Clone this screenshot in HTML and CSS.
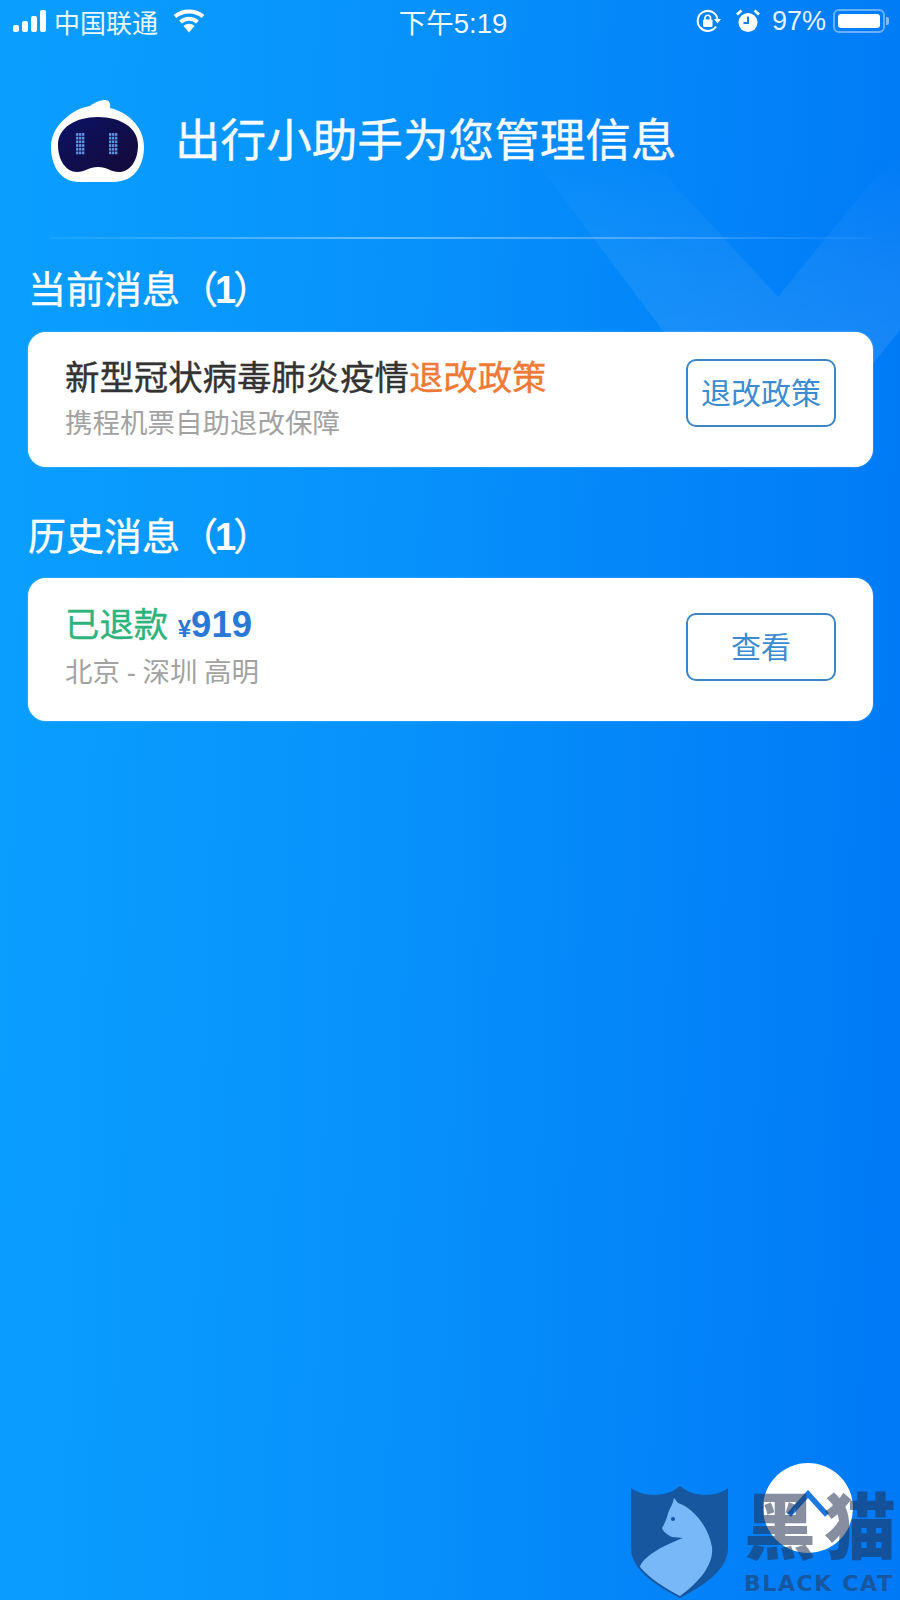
FILE: index.html
```html
<!DOCTYPE html>
<html>
  <head>
    <meta charset="utf-8">
    <meta name="viewport" content="width=device-width, initial-scale=1.0">
    <title>出行小助手</title>
    <link rel="stylesheet" href="styles.css">
  </head>
  <body>
    <div class="page">
      <!-- background V -->
      <svg class="bg-v" viewBox="0 0 900 400" width="900" height="400">
        <defs>
          <linearGradient id="vfade" x1="0" y1="0" x2="0" y2="1">
            <stop offset="0" stop-color="#fff" stop-opacity="0"/>
            <stop offset="0.5" stop-color="#fff" stop-opacity="0.06"/>
            <stop offset="1" stop-color="#fff" stop-opacity="0.1"/>
          </linearGradient>
        </defs>
        <polygon points="535,160 652,160 778,297 885,165 900,150 900,330 860,380 670,340" fill="url(#vfade)"/>
      </svg>

      <div class="status">
        <div class="status-left">
          <div class="signal">
            <span class="bar bar-1"></span>
            <span class="bar bar-2"></span>
            <span class="bar bar-3"></span>
            <span class="bar bar-4"></span>
          </div>
          <span class="carrier">中国联通</span>
          <svg class="wifi" viewBox="0 0 32 24" width="32" height="24">
            <path d="M16 23.5 L10.5 17 C14 14 18 14 21.5 17 Z" fill="#fff"/>
            <path d="M7.5 13 C12.5 8.8 19.5 8.8 24.5 13" fill="none" stroke="#fff" stroke-width="4"/>
            <path d="M2 7.5 C10 0.8 22 0.8 30 7.5" fill="none" stroke="#fff" stroke-width="4"/>
          </svg>
        </div>
        <div class="time">下午5:19</div>
        <div class="status-right">
          <svg class="lock" viewBox="0 0 26 26" width="26" height="26">
            <path d="M21 18.5 A10 10 0 1 1 22.5 11" fill="none" stroke="#fff" stroke-width="2"/>
            <path d="M19 11 L26 11 L22.5 15.5 Z" fill="#fff"/>
            <rect x="8" y="11.5" width="9.5" height="7.5" rx="1" fill="#fff"/>
            <path d="M10 12 V9.5 A2.8 2.8 0 0 1 15.5 9.5 V12" fill="none" stroke="#fff" stroke-width="1.6"/>
          </svg>
          <svg class="alarm" viewBox="0 0 24 24" width="24" height="24">
            <circle cx="12" cy="13.5" r="9.5" fill="#fff"/>
            <path d="M12 7.5 V14 H7.5" fill="none" stroke="#1a7ef0" stroke-width="2"/>
            <path d="M1 5.5 L5.5 1.5 M23 5.5 L18.5 1.5" stroke="#fff" stroke-width="2.8"/>
          </svg>
          <span class="percent">97%</span>
          <div class="battery"><div class="battery-fill"></div></div>
          <div class="battery-tip"></div>
        </div>
      </div>

      <div class="head">
        <svg class="robot" viewBox="0 0 93 82" width="93" height="82">
          <defs>
            <linearGradient id="face" x1="0" y1="0" x2="1" y2="1">
              <stop offset="0" stop-color="#0b1265"/>
              <stop offset="1" stop-color="#150a38"/>
            </linearGradient>
            <pattern id="dots" x="25" y="33" width="3" height="3.7" patternUnits="userSpaceOnUse">
              <rect width="2.4" height="2.8" rx="0.6" fill="#5f93dd"/>
            </pattern>
          </defs>
          <path d="M16 17 C24 10 32 7 39 6 C44 2 50 0 54 0 C58 0 60 3 59 8 C76 12 93 26 93 47 C93 62 86 82 62 82 L28 82 C10 82 0 66 0 47 C0 34 7 24 16 17 Z" fill="#fff"/>
          <path d="M47 17 C70 17 87 28 87 45 C87 62 78 72 68 72 C60 72 56 67 47 67 C38 67 34 72 26 72 C15 72 7 60 7 45 C7 28 24 17 47 17 Z" fill="url(#face)"/>
          <rect x="25" y="33" width="9" height="22" fill="url(#dots)"/>
          <rect x="58" y="33" width="9" height="22" fill="url(#dots)"/>
        </svg>
        <h1 class="head-title">出行小助手为您管理信息</h1>
      </div>
      <div class="divider"></div>

      <div class="section section-current">
        <h2 class="section-title">当前消息<span class="count">（<b>1</b>）</span></h2>
        <div class="card card-current">
          <div class="card-text">
            <p class="card-title">新型冠状病毒肺炎疫情<span class="orange">退改政策</span></p>
            <p class="card-sub">携程机票自助退改保障</p>
          </div>
          <div class="btn btn-current">退改政策</div>
        </div>
      </div>

      <div class="section section-history">
        <h2 class="section-title">历史消息<span class="count">（<b>1</b>）</span></h2>
        <div class="card card-history">
          <div class="card-text">
            <p class="card-title green">已退款 <span class="yen">¥</span><span class="price">919</span></p>
            <p class="card-sub card-sub-history">北京 - 深圳 高明</p>
          </div>
          <div class="btn btn-history">查看</div>
        </div>
      </div>

      <div class="fab">
        <svg viewBox="0 0 44 28" width="44" height="28">
          <path d="M3 25 L22 4 L41 25" fill="none" stroke="#1a78e0" stroke-width="5.5"/>
        </svg>
      </div>

      <!-- watermark -->
      <div class="mark">
        <svg class="shield" viewBox="0 0 97 112" width="97" height="112">
          <path d="M0 2 C14 12 36 11 49 0 C62 11 84 12 97 2 L97 62 C97 84 72 100 49 112 C26 100 0 84 0 62 Z" fill="#17579f"/>
          <path d="M43 12 L47 17 C60 21 77 38 81 61 C83 80 66 98 49 110 C34 102 18 92 9 81 C11 72 30 60 52 52 L41 51 C35 48 32 45 31 42 C34 37 36 32 37 27 C39 22 42 18 43 12 Z" fill="#79b8f8"/>
          <circle cx="42" cy="33" r="2" fill="#17579f"/>
        </svg>
        <div class="mark-text">
          <div class="mark-cn"><span>黑</span><span>猫</span></div>
          <div class="mark-en">BLACK CAT</div>
        </div>
      </div>
    </div>
  </body>
</html>
```

FILE: styles.css
```css
body {
  margin: 0;
  font-family: "Liberation Sans", "Noto Sans CJK SC", sans-serif;
}

.page {
  position: relative;
  width: 900px;
  height: 1600px;
  overflow: hidden;
  background: linear-gradient(92deg, #0a9fff 0%, #0791fb 45%, #0079f6 100%);
}

.bg-v {
  position: absolute;
  left: 0;
  top: 0;
}

/* status bar */
.status {
  position: relative;
  display: grid;
  grid-template-columns: 1fr auto 1fr;
  align-items: center;
  height: 42px;
  color: #fff;
  font-size: 26px;
}

.status-left {
  display: flex;
  align-items: center;
  padding-left: 13px;
}

.signal {
  display: flex;
  align-items: flex-end;
  gap: 3px;
  height: 22px;
}

.bar {
  width: 6px;
  border-radius: 2px;
  background: #fff;
}

.bar-1 { height: 7px; }
.bar-2 { height: 11px; }
.bar-3 { height: 16px; }
.bar-4 { height: 22px; }

.carrier {
  margin-left: 8px;
  opacity: 0.92;
}

.wifi {
  margin-left: 15px;
}

.time {
  padding-left: 6px;
  font-size: 27.5px;
  opacity: 0.95;
}

.status-right {
  display: flex;
  align-items: center;
  justify-content: flex-end;
  padding-right: 11px;
}

.lock {
  margin-right: 15px;
}

.alarm {
  margin-right: 12px;
}

.percent {
  margin-right: 7px;
  font-size: 27px;
  opacity: 0.9;
}

.battery {
  box-sizing: border-box;
  width: 52px;
  height: 24px;
  padding: 3px;
  border: 2px solid rgba(255, 255, 255, 0.4);
  border-radius: 6px;
}

.battery-fill {
  height: 100%;
  border-radius: 3px;
  background: #fff;
}

.battery-tip {
  width: 3px;
  height: 8px;
  margin-left: 1px;
  border-radius: 0 2px 2px 0;
  background: rgba(255, 255, 255, 0.5);
}

/* header */
.head {
  position: relative;
  display: flex;
  align-items: center;
  gap: 31px;
  height: 82px;
  margin-top: 58px;
  padding-left: 51px;
}

.head-title {
  margin: 0 0 8px;
  color: #fff;
  font-size: 45.6px;
  font-weight: 400;
  -webkit-text-stroke: 0.4px #fff;
  opacity: 0.97;
}

.divider {
  position: relative;
  height: 2px;
  margin: 55px 28px 0 50px;
  background: linear-gradient(90deg, rgba(255, 255, 255, 0.05), rgba(255, 255, 255, 0.4) 40%, rgba(255, 255, 255, 0.25) 70%, rgba(255, 255, 255, 0.03));
}

/* sections */
.section {
  position: relative;
  margin: 0 27px 0 28px;
}

.section-current {
  padding-top: 28px;
}

.section-history {
  padding-top: 47px;
}

.section-title {
  margin: 0 0 19px;
  color: #fff;
  font-size: 38px;
  font-weight: 400;
  -webkit-text-stroke: 0.4px #fff;
  line-height: 46px;
}

.section-history .section-title {
  margin-bottom: 18px;
}

.count {
  letter-spacing: -4px;
}

.count b {
  padding: 0 1px;
  -webkit-text-stroke: 0;
}

.card {
  display: flex;
  justify-content: space-between;
  align-items: flex-start;
  box-sizing: border-box;
  padding: 24px 37px 0 37px;
  border-radius: 18px;
  background: #fff;
  box-shadow: 0 0 2px rgba(210, 240, 255, 0.5);
}

.card-current {
  height: 135px;
}

.card-history {
  height: 143px;
  padding-top: 25px;
}

.card-title {
  margin: 0;
  color: #333;
  font-size: 34.4px;
  font-weight: 400;
  -webkit-text-stroke: 0.4px currentColor;
  line-height: 44px;
}

.orange {
  color: #ef7a36;
}

.green {
  color: #2cb47c;
}

.yen {
  color: #2a78d6;
  font-size: 24px;
  font-weight: 700;
  -webkit-text-stroke: 0;
}

.price {
  color: #2a78d6;
  font-size: 36.5px;
  font-weight: 700;
  -webkit-text-stroke: 0;
}

.card-sub {
  margin: 2px 0 0;
  color: #a2a2a2;
  font-size: 27.5px;
  line-height: 44px;
}

.card-sub-history {
  margin-top: 0;
  word-spacing: -1px;
}

.btn {
  box-sizing: border-box;
  width: 150px;
  height: 68px;
  border: 2px solid #3c86c6;
  border-radius: 10px;
  color: #3d8bd0;
  font-size: 30px;
  line-height: 66px;
  text-align: center;
}

.btn-current {
  margin-top: 3px;
}

.btn-history {
  margin-top: 10px;
}

/* floating button */
.fab {
  position: absolute;
  left: 763px;
  top: 1463px;
  display: flex;
  justify-content: center;
  box-sizing: border-box;
  width: 90px;
  height: 90px;
  padding-top: 27px;
  border-radius: 50%;
  background: #fff;
}

/* watermark */
.mark {
  position: absolute;
  left: 631px;
  top: 1486px;
  display: flex;
  gap: 16px;
}

.mark-text {
  display: flex;
  flex-direction: column;
  width: 153px;
}

.mark-cn {
  display: flex;
  gap: 8px;
  color: rgba(34, 50, 80, 0.55);
  font-size: 72px;
  font-weight: 900;
  line-height: 84px;
}

.mark-en {
  margin-top: 2px;
  color: #17579f;
  font-family: "DejaVu Sans", sans-serif;
  font-size: 22px;
  font-weight: 700;
  letter-spacing: 1.6px;
  line-height: 24px;
  white-space: nowrap;
}
```
